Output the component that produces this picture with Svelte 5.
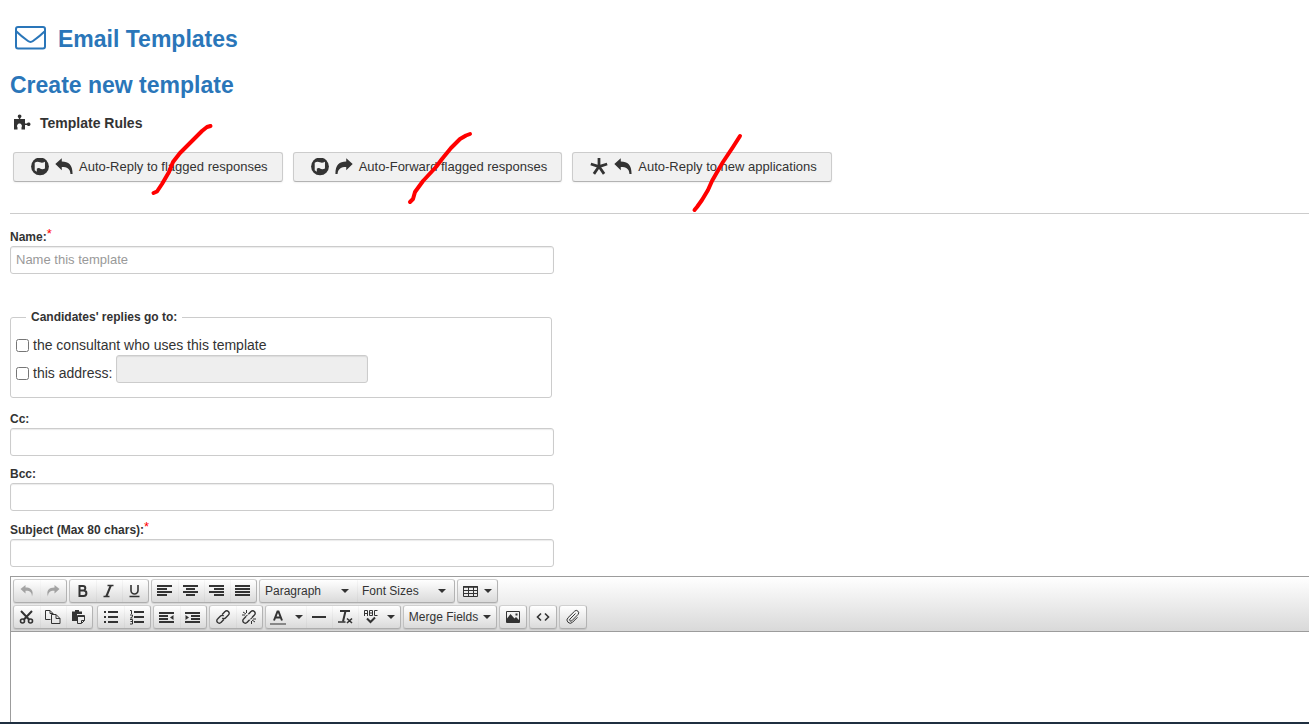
<script>
  const rules = [
    { icons: ['flag', 'reply'], label: 'Auto-Reply to flagged responses' },
    { icons: ['flag', 'forward'], label: 'Auto-Forward flagged responses' },
    { icons: ['asterisk', 'reply'], label: 'Auto-Reply to new applications' }
  ];

  const toolbar = [
    [
      [{ icon: 'undo', title: 'Undo', disabled: true }, { icon: 'redo', title: 'Redo', disabled: true }],
      [{ icon: 'bold', title: 'Bold' }, { icon: 'italic', title: 'Italic' }, { icon: 'underline', title: 'Underline' }],
      [
        { icon: 'left', title: 'Align left' },
        { icon: 'center', title: 'Align center' },
        { icon: 'right', title: 'Align right' },
        { icon: 'justify', title: 'Justify' }
      ],
      [{ text: 'Paragraph', kind: 'list' }, { text: 'Font Sizes', kind: 'list' }],
      [{ icon: 'table', title: 'Table', kind: 'menu' }]
    ],
    [
      [{ icon: 'cut', title: 'Cut' }, { icon: 'copy', title: 'Copy' }, { icon: 'paste', title: 'Paste' }],
      [],
      [{ icon: 'bullets', title: 'Bullet list' }, { icon: 'numbers', title: 'Numbered list' }],
      [{ icon: 'outdent', title: 'Decrease indent' }, { icon: 'indent', title: 'Increase indent' }],
      [{ icon: 'link', title: 'Insert link' }, { icon: 'unlink', title: 'Remove link' }],
      [
        { icon: 'color', title: 'Text color', kind: 'color' },
        { icon: 'hr', title: 'Horizontal line' },
        { icon: 'clear', title: 'Clear formatting' },
        { icon: 'spell', title: 'Spellcheck', kind: 'split' }
      ],
      [{ text: 'Merge Fields', kind: 'text' }],
      [{ icon: 'image', title: 'Insert image' }],
      [{ icon: 'code', title: 'Source code' }],
      [{ icon: 'clip', title: 'Attach file' }]
    ]
  ];

  let name = $state('');
  let toConsultant = $state(false);
  let toAddress = $state(false);
  let address = $state('');
  let cc = $state('');
  let bcc = $state('');
  let subject = $state('');
</script>

{#snippet ruleIcon(id)}
  <svg class="rule-icon" viewBox="0 0 17 17" aria-hidden="true">
    {#if id === 'flag'}
      <circle cx="8.5" cy="8" r="8.4" />
      <path class="cutout" d="M3.500 4.500c2-1.500 3.500-1.200 5-.4s2.800.5 4.700-.5v6.200c-1.500 1-3.200 1-4.700.2-1.200-.7-2-.5-3 .1v3l-2-1.500z" />
    {:else if id === 'reply'}
      <path d="M.3 5.700 6.400.3v3.100c6.500 0 10.200 3 10.200 11.600h-2c-.4-5-3-6.500-8.200-6.500v3z" />
    {:else if id === 'forward'}
      <path d="M16.700 5.700 10.600.3v3.100C4.100 3.400.4 6.400.4 15h2c.6-5 3.300-6.500 8.200-6.500v3z" />
    {:else}
      <path class="star" d="M8.500 8V0M8.500 8.200.8 5.700M8.500 8.200l7.700-2.500M8.500 8 3.700 15M8.500 8l4.800 7" />
    {/if}
  </svg>
{/snippet}

{#snippet toolIcon(id)}
  <svg class="tool-icon" viewBox="0 0 16 16" aria-hidden="true">
    {#if id === 'undo'}
      <path class="fill" d="M1.500 6 6.500 2v2.500c5.500 0 8.500 3 6.500 9 0-4-2-6-6.500-5.800V10.500z" />
    {:else if id === 'redo'}
      <path class="fill" d="M14.500 6 9.500 2v2.500c-5.500 0-8.500 3-6.500 9 0-4 2-6 6.500-5.800V10.500z" />
    {:else if id === 'bold'}
      <path class="thick" d="M4.500 3h3.500a2.300 2.300 0 0 1 0 4.600H4.500zM4.500 7.600h4.200a2.700 2.700 0 0 1 0 5.400H4.500z" />
    {:else if id === 'italic'}
      <path class="mid" d="M6.500 2.500h6M2.500 13.500h6" /><path class="thick" d="M9.800 2.500 5.300 13.500" />
    {:else if id === 'underline'}
      <path class="mid" d="M4 2v5.500a3.500 3.500 0 0 0 7 0V2M2.500 13.500h10" />
    {:else if id === 'left'}
      <path class="bars" d="M0 3h15M0 6h10M0 9h15M0 12h10" />
    {:else if id === 'center'}
      <path class="bars" d="M0 3h15M3 6h9M0 9h15M3 12h9" />
    {:else if id === 'right'}
      <path class="bars" d="M0 3h15M5 6h10M0 9h15M5 12h10" />
    {:else if id === 'justify'}
      <path class="bars" d="M0 3h15M0 6h15M0 9h15M0 12h15" />
    {:else if id === 'table'}
      <path class="line" d="M.5 3.500h14v10H.5zM.5 7.500h14M.5 10.500h14M5.500 4v9.500M10.500 4v9.500" /><path class="mid" d="M0 4h15" />
    {:else if id === 'cut'}
      <path class="thick" d="M2 2 10.500 11M13 2 4.500 11" />
      <circle class="mid" cx="3.500" cy="12" r="2" /><circle class="mid" cx="11.500" cy="12" r="2" />
    {:else if id === 'copy'}
      <path class="line" d="M5.500 10.500H.5v-9H5l3 3V5M5 1.500V4.500h3M6.500 5.500H11L15 9.500v5h-8.500zM11 5.500v4h4" />
    {:else if id === 'paste'}
      <path class="fill" d="M1 2.500H4V1h4v1.500h3V5H6v7H1z" />
      <path class="line" d="M6.500 6.500h7v5L10.500 14.500h-4zM10.500 14V11.500H13.500" /><path class="thick" d="M7 7h6" />
    {:else if id === 'bullets'}
      <path class="bars" d="M5 3h10M5 8h10M5 13h10M1 3h2M1 8h2M1 13h2" />
    {:else if id === 'numbers'}
      <path class="bars" d="M5 3h10M5 8h10M5 13h10" />
      <path class="line" d="M1 1.500h1.500v3.500M1 6h2.500v1.500L1.500 9h2M1 10.500h2.500v4.500H1M1.500 12.500h2" />
    {:else if id === 'outdent'}
      <path class="bars" d="M0 4h15M0 7h9M0 10h9M0 13h15" /><path class="fill" d="m14.500 6v5L11 8.500z" />
    {:else if id === 'indent'}
      <path class="bars" d="M0 4h15M6 7h9M6 10h9M0 13h15" /><path class="fill" d="M.5 6v5L4 8.500z" />
    {:else if id === 'link' || id === 'unlink'}
      <path class="chain" d="M7.200 5.500 10 2.600a2.200 2.200 0 0 1 3.400 0 2.200 2.200 0 0 1 0 3.400L10.500 8.900a2.200 2.200 0 0 1-3.200 0M8.800 10.500 6 13.400a2.200 2.200 0 0 1-3.400 0 2.200 2.200 0 0 1 0-3.400L5.500 7.100a2.200 2.200 0 0 1 3.200 0" />
      {#if id === 'unlink'}
        <path class="gap" d="m6.500 6.500 3 3" />
        <path class="line" d="M2 3l3 2M5.500 1v3M1 6h3M14 13l-3-2M10.500 15v-3M15 10h-3" />
      {/if}
    {:else if id === 'color'}
      <path class="thick" d="M4 11.500 7.500 2.500h1L12 11.500M5.500 8.500h5" /><path class="under" d="M0 15h16" />
    {:else if id === 'hr'}
      <path class="bars" d="M1 8h14" />
    {:else if id === 'clear'}
      <path class="thick" d="M3 2h10M8.500 2 6 12.500" /><path class="mid" d="M1 13h7.500M10 9.500l5 4.500M15 9.500 10 14" />
    {:else if id === 'spell'}
      <path class="line" d="M1.500 7V1.500h3V7M1.500 4.500h3M6.500 1.500h3v5h-3zM6.500 4h3M14.500 1.500h-3v5h3" /><path class="thick" d="m4 9.500 3.500 3.500L12 8.500" />
    {:else if id === 'image'}
      <path class="line" d="M1.500 2.500h13v11h-13z" /><path class="fill" d="M2 13V9.500L5.500 5l4 4.500L11 8l3 3v2zM10.500 4.500h2v2h-2z" />
    {:else if id === 'code'}
      <path class="mid" d="M6 4.500 2.500 8 6 11.500M10 4.500 13.500 8 10 11.500" />
    {:else if id === 'clip'}
      <path class="line" d="M10.500 4.500 5 10a1.200 1.200 0 0 0 1.800 1.800l6.200-6.300a2.300 2.300 0 0 0-3.400-3.300L3 8.700a3.200 3.200 0 0 0 4.500 4.600l5-5" />
    {/if}
  </svg>
{/snippet}

<div class="page">
  <main>
    <h1>
      <svg class="envelope" viewBox="0 0 32 26" aria-hidden="true">
        <rect x="1" y="3" width="29" height="21.500" rx="2" />
        <path d="M1.500 7.500c4 4 8 7 11.500 9.500 1.800 1.300 3.200 1.300 5 0C21.500 14.500 25.500 11.500 29.500 7.500" />
      </svg>
      Email Templates
    </h1>
    <h2>Create new template</h2>
    <h3>
      <svg class="puzzle" viewBox="0 0 18 18" aria-hidden="true">
        <path d="M1 5h5c.2-1-1.300-1.300-1.300-2.700A1.900 1.900 0 0 1 8.500 2.300C8.500 3.700 7 4 7.200 5H12v4.500h2c.6-1.500 3.500-1.500 3.500.7s-2.900 2.200-3.500.7h-2V15.500H8.500V13.500c1.200-2.300-.5-4-2-4s-3.200 1.700-2 4v2H1z" />
      </svg>
      Template Rules
    </h3>

    <div class="rules">
      {#each rules as rule}
        <button type="button" class="rule">
          {#each rule.icons as id}{@render ruleIcon(id)}{/each}
          <span>{rule.label}</span>
        </button>
      {/each}
      <svg class="strikes" viewBox="0 0 840 100" aria-hidden="true">
        <path d="M200.500 6 197 7 192 11 183 20 170 33 163 42 159 52 152 64 147 71.500 143.500 73" />
        <path d="M460 14 456 15.500 450 19 441 28 432 39 426 47 413 61 405 72 403 79 400 82" />
        <path d="M730 16 723 27 713 42 706 54 702 61 698 70 692 80 687 87 684.500 90" />
      </svg>
    </div>

    <hr />

    <form onsubmit={(e) => e.preventDefault()}>
      <div class="field name">
        <label class="required" for="name">Name:<sup>*</sup></label>
        <input id="name" type="text" placeholder="Name this template" bind:value={name} />
      </div>

      <fieldset>
        <legend>Candidates' replies go to:</legend>
        <div class="choice">
          <input id="consultant" type="checkbox" bind:checked={toConsultant} />
          <label for="consultant">the consultant who uses this template</label>
        </div>
        <div class="choice">
          <input id="other" type="checkbox" bind:checked={toAddress} />
          <label for="other">this address:</label>
          <input class="address" type="text" aria-label="Reply address" disabled={!toAddress} bind:value={address} />
        </div>
      </fieldset>

      <div class="field">
        <label for="cc">Cc:</label>
        <input id="cc" type="text" bind:value={cc} />
      </div>
      <div class="field">
        <label for="bcc">Bcc:</label>
        <input id="bcc" type="text" bind:value={bcc} />
      </div>
      <div class="field">
        <label class="required" for="subject">Subject (Max 80 chars):<sup>*</sup></label>
        <input id="subject" type="text" maxlength="80" bind:value={subject} />
      </div>
    </form>

    <section class="editor">
      <div class="toolbar" role="toolbar" aria-label="Formatting">
        {#each toolbar as row}
          <div class="tools">
            {#each row as group}
              <div class="group" class:empty={!group.length}>
                {#each group as tool}
                  <button type="button" class="tool {tool.kind ?? ''}" title={tool.title} disabled={tool.disabled}>
                    {#if tool.icon}{@render toolIcon(tool.icon)}{:else}<span>{tool.text}</span>{/if}
                    {#if tool.kind}<i class="caret"></i>{/if}
                  </button>
                {/each}
              </div>
            {/each}
          </div>
        {/each}
      </div>
      <textarea aria-label="Message body"></textarea>
    </section>
  </main>
  <footer></footer>
</div>

<style>
  :global(body) { background: #fff; }
  .page {
    min-height: 100vh; display: flex; flex-direction: column; box-sizing: border-box;
    font-family: 'Liberation Sans', Arial, sans-serif; font-size: 14px; line-height: 20px; color: #333;
  }
  main { flex: 1; display: flex; flex-direction: column; padding: 24px 0 0 10px; }
  h1, h2, h3 { margin: 0; font-weight: bold; }
  h1, h2 { font-size: 23px; line-height: 30px; color: #2a76b9; }
  h1 { display: flex; align-items: flex-start; gap: 11px; padding-left: 5px; margin-bottom: 16px; }
  h3 { display: flex; align-items: center; gap: 9px; padding-left: 3px; margin: 13px 0 19px; font-size: 14px; }
  .envelope { width: 32px; height: 26px; fill: none; stroke: #2a76b9; stroke-width: 2; }
  .puzzle { width: 18px; height: 18px; fill: #333; }

  .rules { position: relative; display: flex; flex-wrap: wrap; gap: 10px; padding-left: 3px; }
  .rule {
    display: flex; align-items: center; height: 30px; padding: 0 14px 0 17px;
    font: 13px/18px 'Liberation Sans', Arial, sans-serif; color: #333;
    background: #f1f1f1; border: 1px solid #ccc; border-bottom-color: #b3b3b3; border-radius: 3px;
    box-shadow: 0 1px 2px rgba(0, 0, 0, .06); cursor: pointer;
  }
  .rule-icon { width: 18px; height: 18px; margin-right: 6px; fill: #333; }
  .cutout { fill: #f1f1f1; }
  .star { fill: none; stroke: #333; stroke-width: 2.6; }
  .strikes {
    position: absolute; left: 0; top: -32px; width: 840px; height: 100px; overflow: visible;
    fill: none; stroke: #f00; stroke-width: 4; stroke-linecap: round; stroke-linejoin: round; pointer-events: none;
  }
  hr { width: 100%; margin: 31px 0 13px; border: 0; border-top: 1px solid #ccc; }

  .field { display: flex; flex-direction: column; max-width: 544px; margin-bottom: 9px; }
  .field.name { margin-bottom: 33px; }
  .field label, legend { font-size: 12px; line-height: 18px; font-weight: bold; }
  .field label.required { padding-top: 1px; }
  sup { font-size: 13px; font-weight: normal; line-height: 0; color: #f00; vertical-align: 3px; }
  input[type='text'] {
    height: 28px; box-sizing: border-box; padding: 0 5px 1px; color: #555; background: #fff;
    font: 13px/18px 'Liberation Sans', Arial, sans-serif;
    border: 1px solid #ccc; border-radius: 3px; box-shadow: inset 0 1px 1px rgba(0, 0, 0, .08);
  }
  input::placeholder { color: #999; }
  input[type='text']:disabled { background: #eee; }
  fieldset {
    max-width: 542px; box-sizing: border-box; margin: 0 0 12px; padding: 8px 5px 14px;
    border: 1px solid #ccc; border-radius: 3px;
  }
  legend { margin-left: 10px; padding: 1px 5px; }
  .choice { display: flex; align-items: flex-end; }
  .choice input[type='checkbox'] { width: 13px; height: 13px; margin: 0 4px 3px 0; }
  .choice .address { width: 252px; margin-left: 4px; }

  .editor { flex: 1; display: flex; flex-direction: column; border: 1px solid #9c9c9c; border-width: 1px 0 0 1px; }
  .toolbar {
    display: flex; flex-direction: column; gap: 2px; padding: 2px; border-bottom: 1px solid #9c9c9c;
    background: linear-gradient(#fff, #d9d9d9);
  }
  .tools { display: flex; flex-wrap: wrap; gap: 2px; }
  .group {
    display: flex; border: 1px solid #c1c1c1; border-color: #d0d0d0 #b3b3b3 #adadad #c1c1c1; border-radius: 3px;
    background: linear-gradient(#fff, #dadada); box-shadow: 0 1px 1px rgba(0, 0, 0, .1);
  }
  .group.empty { border: 0; box-shadow: none; }
  .tool {
    display: flex; align-items: center; justify-content: center; width: 26px; height: 22px; padding: 0;
    font: 12px/18px 'Liberation Sans', Arial, sans-serif; color: #333; background: none; border: 0; cursor: pointer;
  }
  .tool + .tool { box-shadow: inset 1px 0 0 rgba(0, 0, 0, .03); }
  .tool:disabled { opacity: .4; }
  .tool.list { width: 97px; justify-content: space-between; padding: 0 8px 0 5px; }
  .tool.menu { width: 39px; gap: 5px; }
  .tool.color { width: 40px; gap: 9px; }
  .tool.split { width: 42px; gap: 8px; }
  .tool.text { width: 92px; gap: 5px; }
  .caret { border: 4px solid transparent; border-top-color: #333; border-bottom: 0; }
  .tool-icon { width: 16px; height: 16px; flex: none; fill: none; stroke: #333; }
  .fill { fill: #333; stroke: none; }
  .line { stroke-width: 1; }
  .mid { stroke-width: 1.6; }
  .thick, .bars { stroke-width: 2; }
  .chain { stroke-width: 1.4; }
  .gap { stroke: #eee; stroke-width: 4; }
  .under { stroke: #888; stroke-width: 2; }
  textarea { flex: 1; min-height: 90px; box-sizing: border-box; border: 0; padding: 8px; resize: none; outline: 0; font: inherit; background: #fff; }
  footer { height: 2px; background: #1f2f40; }
</style>
